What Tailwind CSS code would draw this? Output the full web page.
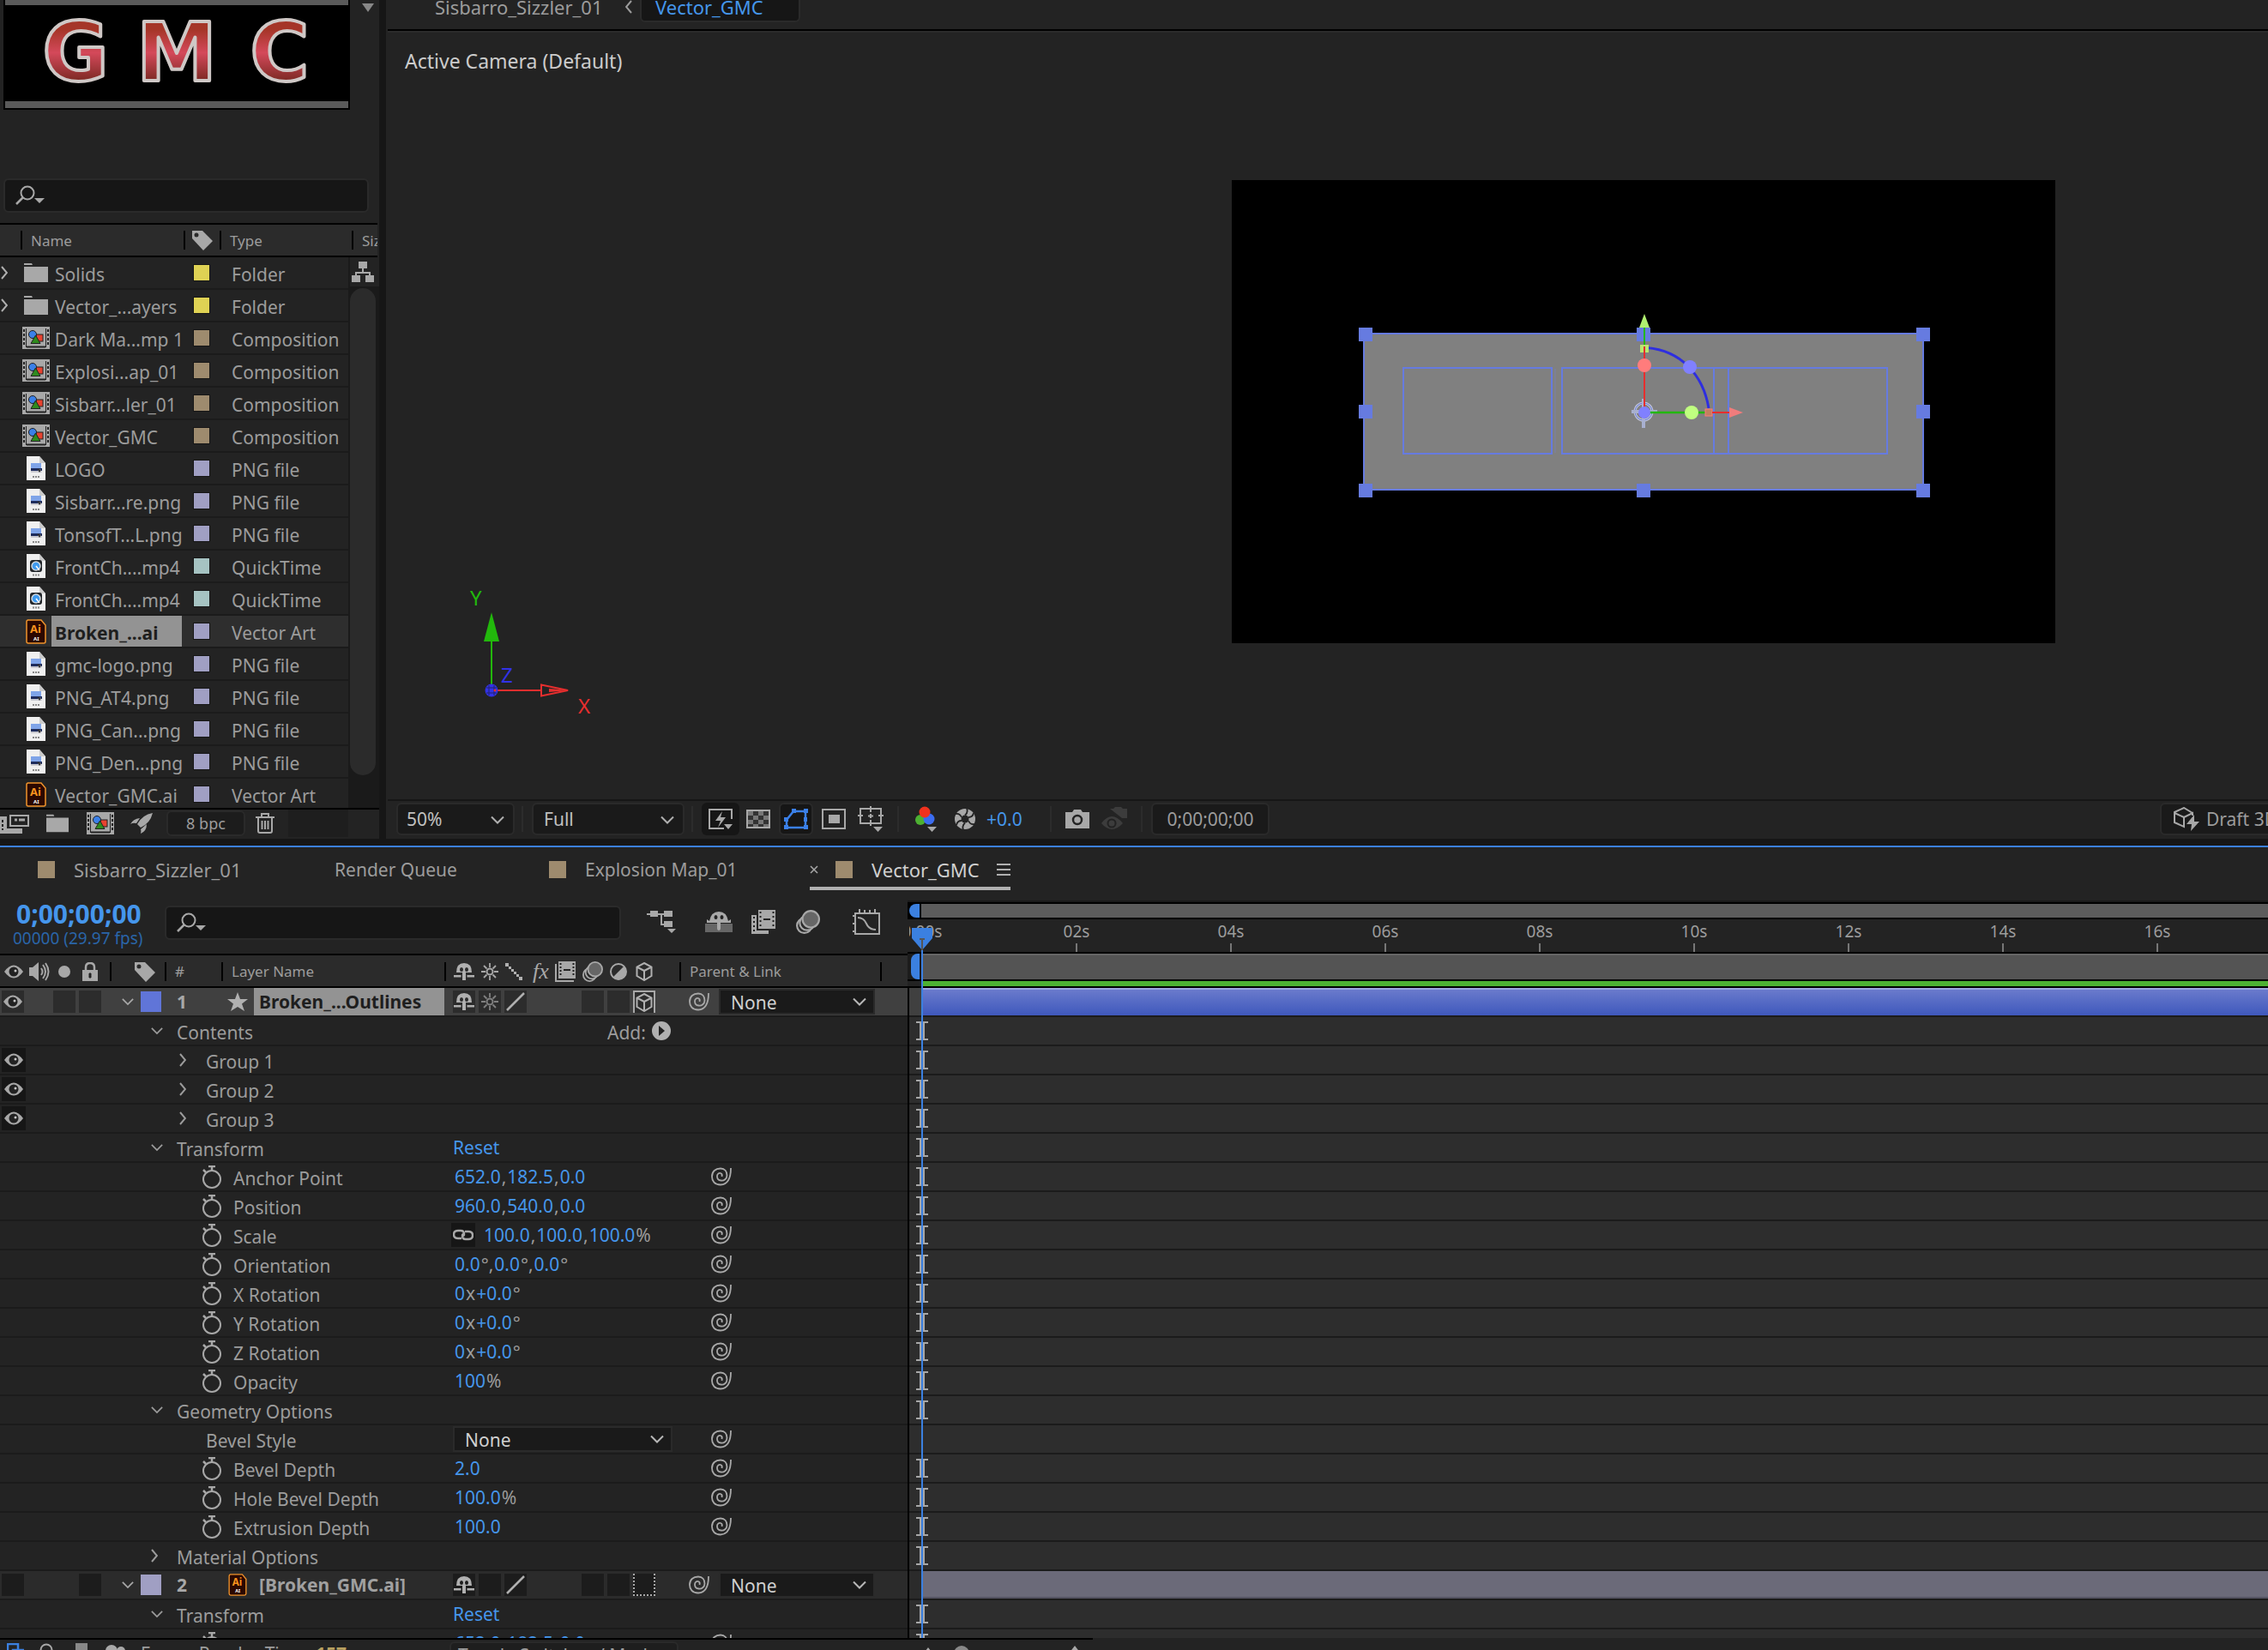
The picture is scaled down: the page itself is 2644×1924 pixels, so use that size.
<!DOCTYPE html>
<html lang="en">
<head>
<meta charset="utf-8">
<title>Vector_GMC – Compositor</title>
<script src="https://cdn.jsdelivr.net/npm/@tailwindcss/browser@4"></script>
</head>
<body class="h-screen overflow-hidden bg-[#161616] font-['Noto_Sans',sans-serif] text-[21px] leading-7 text-[#9c9c9c]">

<svg class="hidden" aria-hidden="true">
  <symbol id="eye" viewBox="0 0 22 16"><path d="M0 8Q11 -7 22 8Q11 23 0 8Z" fill="#a8a8a8"/><circle cx="11" cy="8" r="5.5" fill="#222"/><circle cx="11" cy="8" r="3.2" fill="#222"/><circle cx="13" cy="7" r="1.5" fill="#c8c8c8"/></symbol>
  <symbol id="down" viewBox="0 0 16 10"><path d="M1 1.5L8 8.5L15 1.5" fill="none" stroke="currentColor" stroke-width="2"/></symbol>
  <symbol id="right" viewBox="0 0 8 16"><path d="M1 1L7 8L1 15" fill="none" stroke="currentColor" stroke-width="2"/></symbol>
  <symbol id="search" viewBox="0 0 34 24"><circle cx="14" cy="9" r="7.5" fill="none" stroke="#a8a8a8" stroke-width="2"/><path d="M9 14L1 22" stroke="#a8a8a8" stroke-width="2.5"/><path d="M22 15H34L28 21Z" fill="#a8a8a8"/></symbol>
  <symbol id="tag" viewBox="0 0 24 24"><path fill-rule="evenodd" d="M0 1V10L13 24L24 13L12 1ZM5 3.5A2.5 2.5 0 1 1 5 8.5A2.5 2.5 0 1 1 5 3.5Z" fill="#a8a8a8"/></symbol>
  <symbol id="folder" viewBox="0 0 28 22"><path d="M0 0H9L10 2H0ZM0 4H28V22H0Z" fill="#a8a8a8"/></symbol>
  <symbol id="comp" viewBox="0 0 32 26"><path d="M0 0H32V26H0Z" fill="#a8a8a8"/><path d="M2 3V6M2 8V11M2 13V16M2 18V21M30 3V6M30 8V11M30 13V16M30 18V21" stroke="#222" stroke-width="2"/><path d="M4 2H5V24H4ZM27 2H28V24H27ZM5 22.5H27V24.5H5Z" fill="#222"/><rect x="16" y="9" width="8" height="8" fill="#e8422f" stroke="#222"/><circle cx="12" cy="9" r="4.500" fill="#3b80e8" stroke="#222"/><path d="M15.500 10L21 19.500H10Z" fill="#2f8a1e" stroke="#222"/></symbol>
  <symbol id="png" viewBox="0 0 22 28"><path d="M0 0H15L22 8V28H0Z" fill="#efefef"/><path d="M15 0V8H22Z" fill="#c9c9c9"/><rect x="5" y="8" width="12" height="6" fill="#7fa4e8"/><rect x="5" y="14" width="13" height="3" fill="#1d2b5c"/><path d="M5 17H13L16 15L18 19H5Z" fill="#c9c9cf"/><path d="M12 14L17 16L15 19Z" fill="#333"/><path d="M7 24H9M10 24H12M13 24H15" stroke="#888" stroke-width="2"/></symbol>
  <symbol id="mp4" viewBox="0 0 22 28"><path d="M0 0H15L22 8V28H0Z" fill="#efefef"/><path d="M15 0V8H22Z" fill="#c9c9c9"/><rect x="4" y="7" width="14" height="14" rx="3" fill="#202428"/><circle cx="11" cy="14" r="5" fill="#3f9bf0" stroke="#d0d8e0" stroke-width="1.500"/><path d="M11 14L15 19" stroke="#fff" stroke-width="1.500"/><path d="M7 24.500H9M10 24.500H12M13 24.500H15" stroke="#888" stroke-width="2"/></symbol>
  <symbol id="ai" viewBox="0 0 24 29"><path d="M2 1H18L23 7V26Q23 28 21 28H3Q1 28 1 26V3Q1 1 3 1Z" fill="#2b0800" stroke="#f0922b" stroke-width="1.500"/><text x="5" y="16" font-family="Noto Sans" font-weight="700" font-size="13" fill="#f7931e">Ai</text><text x="9" y="25" font-family="Noto Sans" font-weight="700" font-size="6" fill="#fff">AI</text></symbol>
  <symbol id="tree" viewBox="0 0 26 24"><path d="M8 0H18V8H8ZM0 16H10V24H0ZM16 16H26V24H16Z" fill="#a8a8a8"/><path d="M13 8V13M5 16V13H21V16" fill="none" stroke="#a8a8a8" stroke-width="2"/></symbol>
  <symbol id="interpret" viewBox="0 0 34 24"><path d="M12 3H33V15H12Z" fill="none" stroke="#a8a8a8" stroke-width="2"/><path d="M17 8H20M22 8H29" stroke="#a8a8a8" stroke-width="3"/><path d="M0 4H8V18H26V24H0Z" fill="#a8a8a8"/><path d="M3 8V20" stroke="#222" stroke-width="2" stroke-dasharray="3 2"/></symbol>
  <symbol id="rocket" viewBox="0 0 26 24"><path d="M26 0Q14 2 8 13L12 17Q23 12 26 0ZM0 13Q3 7 11 6L7 12Q3 11 0 13ZM12 24Q13 21 12 19L19 13Q19 21 12 24Z" fill="#a8a8a8"/></symbol>
  <symbol id="trash" viewBox="0 0 22 24"><path d="M0 5H22M7 4V1H15V4M3 5V21Q3 23 5 23H17Q19 23 19 21V5M7.500 9V19M11 9V19M14.500 9V19" fill="none" stroke="#a8a8a8" stroke-width="2"/></symbol>
  <symbol id="speaker" viewBox="0 0 24 22"><path d="M0 6H4L11 0V22L4 16H0Z" fill="#a8a8a8"/><path d="M14 7Q17 11 14 15M16 3Q22 11 16 19M19 1Q26 11 19 21" fill="none" stroke="#a8a8a8" stroke-width="2"/></symbol>
  <symbol id="lock" viewBox="0 0 18 22"><path d="M0 9H18V22H0Z" fill="#a8a8a8"/><path d="M4 10V6Q4 1 9 1Q14 1 14 6V10" fill="none" stroke="#a8a8a8" stroke-width="2.500"/><path d="M8 13H10V18H8Z" fill="#222" stroke="#222"/></symbol>
  <symbol id="shy" viewBox="0 0 24 20"><path fill-rule="evenodd" d="M3 11Q3 0 12 0Q21 0 21 11ZM9 5A2 2.500 0 1 0 9 10A2 2.500 0 1 0 9 5ZM15 5A2 2.500 0 1 0 15 10A2 2.500 0 1 0 15 5Z" fill="#b0b0b0"/><path d="M10 10H14V20H10ZM0 14H8.500V16.500H0ZM15.500 14H24V16.500H15.500Z" fill="#b0b0b0"/></symbol>
  <symbol id="sun" viewBox="0 0 20 20"><circle cx="10" cy="10" r="3.500" fill="none" stroke="currentColor" stroke-width="2"/><path d="M10 0V5M10 15V20M0 10H5M15 10H20M3 3L6.500 6.500M13.500 13.500L17 17M17 3L13.500 6.500M6.500 13.500L3 17" stroke="currentColor" stroke-width="1.800"/></symbol>
  <symbol id="steps" viewBox="0 0 20 20"><path d="M0 0H4V4H0ZM4 4H7V7H4ZM7 7H10V10H7ZM10 10H13V13H10ZM13 13H16V16H13ZM16 16H20V20H16Z" fill="#b0b0b0"/></symbol>
  <symbol id="slash" viewBox="0 0 22 22"><path d="M1 21L21 1" stroke="#b0b0b0" stroke-width="2.500"/></symbol>
  <symbol id="film" viewBox="0 0 24 24"><path d="M4 0H24V20H4Z" fill="#a8a8a8"/><path d="M6.500 2V18M21.500 2V18" stroke="#222" stroke-width="2" stroke-dasharray="2 2"/><path d="M10 10H18" stroke="#222" stroke-width="2"/><path d="M1 3V23H22" fill="none" stroke="#a8a8a8" stroke-width="2"/></symbol>
  <symbol id="blur" viewBox="0 0 26 26"><circle cx="9" cy="17" r="8" fill="#2b2b2b" stroke="#a8a8a8" stroke-width="2"/><circle cx="12" cy="14" r="8" fill="#2b2b2b" stroke="#a8a8a8" stroke-width="2"/><circle cx="16" cy="10" r="9" fill="#666" stroke="#a8a8a8" stroke-width="2"/></symbol>
  <symbol id="half" viewBox="0 0 20 20"><circle cx="10" cy="10" r="9" fill="none" stroke="#a8a8a8" stroke-width="2"/><path d="M16.500 3.500A9 9 0 0 1 3.500 16.500Z" fill="#a8a8a8"/></symbol>
  <symbol id="cube" viewBox="0 0 20 22"><path d="M10 1L18.500 5.500V16L10 21L1.500 16V5.500ZM1.500 5.500L10 10L18.500 5.500M10 10V21" fill="none" stroke="#b0b0b0" stroke-width="2"/></symbol>
  <symbol id="whip" viewBox="0 0 24 22"><path d="M23 1C23 9 21 20 11 20.500C4 20.500 1 16 1 11C1 5 5 1.500 11 1.500C16 1.500 18.500 5 18.500 9.500C18.500 13.500 15 16 11.500 15.500C8 15.300 7 12.500 7 10.500C7 8 9 6.500 11 7C13 7.500 13 9 12.500 11" fill="none" stroke="#a8a8a8" stroke-width="1.800"/></symbol>
  <symbol id="watch" viewBox="0 0 22 27"><circle cx="11" cy="16" r="10" fill="none" stroke="#a8a8a8" stroke-width="2"/><path d="M7 1H15M11 1V6M1 5L4 8" stroke="#a8a8a8" stroke-width="2.500"/></symbol>
  <symbol id="link" viewBox="0 0 24 14"><path d="M10 11H6Q1 11 1 6.500Q1 2 6 2H9Q13 2 13 6Q13 8 11 8M14 3H18Q23 3 23 7.500Q23 12 18 12H15Q11 12 11 8Q11 6 13 6" fill="none" stroke="#a8a8a8" stroke-width="2.500"/></symbol>
  <symbol id="play" viewBox="0 0 22 22"><circle cx="11" cy="11" r="11" fill="#b0b0b0"/><path d="M8 5L15 11L8 17Z" fill="#222"/></symbol>
  <symbol id="star" viewBox="0 0 24 22"><path d="M12 0L15 8H24L17 13.500L20 22L12 17L4 22L7 13.500L0 8H9Z" fill="#b0b0b0"/></symbol>
  <symbol id="ibeam" viewBox="0 0 14 22"><path d="M0 0H14V2H10V20H14V22H0V20H4V2H0Z" fill="#a8a8a8"/></symbol>
</svg>

<main class="flex h-full flex-col">
  <section class="flex h-[978px] shrink-0">
    <!-- Project panel -->
    <aside class="flex w-[442px] shrink-0 flex-col bg-[#232323]" aria-label="Project">
      <div class="flex h-[208px] items-start pl-1">
        <div class="flex h-32 w-[404px] flex-col justify-between border-2 border-t-0 border-black bg-black">
          <div class="h-1.5 bg-[#5a5a5a]"></div>
          <svg class="h-[112px] w-[400px]" viewBox="0 0 400 112" role="img" aria-label="GMC">
            <defs><linearGradient id="red" x1="0" y1="0" x2="0" y2="1"><stop offset=".25" stop-color="#a53528"/><stop offset=".5" stop-color="#d4495a"/><stop offset=".8" stop-color="#7d2a24"/></linearGradient></defs>
            <g font-family="DejaVu Sans" font-weight="700" font-size="94" text-anchor="middle" fill="url(#red)" stroke="#cfc8c6" stroke-width="4" stroke-linejoin="round">
              <text x="82" y="88">G</text><text x="200" y="88">M</text><text x="320" y="88">C</text>
            </g>
          </svg>
          <div class="h-2 bg-[#5a5a5a]"></div>
        </div>
        <svg class="mt-1 ml-3.5 h-2.5 w-3.5" viewBox="0 0 14 10"><path d="M0 0H14L7 10Z" fill="#888"/></svg>
      </div>
      <label class="ml-1 flex h-10 w-[426px] items-center rounded-md border-2 border-[#2a2a2a] bg-[#161616] pl-3">
        <svg class="h-6 w-[34px]"><use href="#search"/></svg>
        <input type="text" aria-label="Search project" class="min-w-0 flex-1 bg-transparent px-2 outline-none">
      </label>
      <div class="relative mt-3 h-[684px] overflow-hidden border-b-2 border-black">
        <table class="w-[440px] table-fixed border-separate border-spacing-0 text-left">
          <colgroup><col class="w-[214px]"><col class="w-[42px]"><col class="w-[154px]"><col class="w-[30px]"></colgroup>
          <thead class="text-[17px]">
            <tr class="h-10 bg-[#2b2b2b]">
              <th class="h-10 border-y-2 border-black p-0 font-normal"><span class="ml-6 flex h-[22px] items-center border-l-2 border-black pt-0.5 pl-2.5">Name</span></th>
              <th class="border-y-2 border-black p-0"><span class="flex h-[22px] items-center border-l-2 border-black pl-2"><svg class="h-6 w-6"><use href="#tag"/></svg></span></th>
              <th class="border-y-2 border-black p-0 font-normal"><span class="flex h-[22px] items-center border-l-2 border-black pt-0.5 pl-2.5">Type</span></th>
              <th class="border-y-2 border-black p-0 font-normal"><span class="flex h-[22px] items-center overflow-hidden border-l-2 border-black pt-0.5 pl-2.5">Size</span></th>
            </tr>
          </thead>
          <tbody id="files"></tbody>
        </table>
        <div class="absolute top-10 right-0 bottom-0 w-9 bg-[#1a1a1a] pl-0.5">
          <div class="flex h-[34px] items-center bg-[#232323] pl-0.5"><svg class="h-6 w-[26px]"><use href="#tree"/></svg></div>
          <div class="mt-0.5 h-[568px] w-[30px] rounded-full bg-[#2b2b2b]"></div>
        </div>
      </div>
      <div class="flex flex-1 items-center pb-0.5">
        <svg class="h-6 w-[34px]"><use href="#interpret"/></svg>
        <svg class="ml-5 h-[22px] w-[26px]"><use href="#folder"/></svg>
        <svg class="ml-5 h-[26px] w-[34px]"><use href="#comp"/></svg>
        <svg class="ml-[18px] h-6 w-[26px]"><use href="#rocket"/></svg>
        <button class="ml-4 h-[30px] w-[92px] rounded-md border-2 border-[#2a2a2a] bg-[#1c1c1c] text-[18px] leading-6">8 bpc</button>
        <svg class="ml-3 h-6 w-[22px]"><use href="#trash"/></svg>
        <span class="ml-4 h-8 w-[70px] bg-[#1e1e1e]"></span>
      </div>
    </aside>

    <!-- Composition viewer -->
    <section class="ml-2 flex min-w-0 flex-1 flex-col overflow-hidden bg-[#232323] pl-0.5" aria-label="Composition">
      <nav class="flex h-[38px] items-start border-b-2 border-[#2b2b2b]">
        <div class="flex h-9 w-full items-start border-b-2 border-black pl-[55px]">
          <a href="#" class="-mt-1.5 w-[192px] text-[22px]">Sisbarro_Sizzler_01</a>
          <svg class="ml-[29px] h-4 w-2.5 rotate-180" viewBox="0 0 8 16"><use href="#right"/></svg>
          <a href="#" class="ml-2 h-[26px] w-[187px] rounded-b-md border-2 border-t-0 border-[#2a2a2a] bg-[#161616] pl-4 text-[22px] text-[#4596ec]"><span class="-mt-1.5 block">Vector_GMC</span></a>
        </div>
      </nav>
      <div class="relative flex-1 overflow-hidden">
        <p class="px-5 pt-3.5 text-[23px] leading-[38px] text-[#cccccc]">Active Camera (Default)</p>
        <svg class="absolute top-[640px] left-[80px] h-[170px] w-[170px]" viewBox="532 678 170 170" font-family="Noto Sans" font-size="24">
          <text x="548" y="706" fill="#22b80c">Y</text><text x="584" y="796" fill="#3232e6">Z</text><text x="674" y="832" fill="#e62e2e">X</text>
          <path d="M573 800V747" stroke="#22b80c" stroke-width="2"/><path d="M573 714L582 748H564Z" fill="#22b80c"/>
          <path d="M578 805H632" stroke="#e62e2e" stroke-width="2"/><path d="M631 798.500L662 805L631 811.500Z" fill="none" stroke="#e62e2e" stroke-width="2"/><path d="M640 803L664 805L640 807Z" fill="#e62e2e"/>
          <circle cx="573" cy="805" r="7.500" fill="#3232e6"/><path d="M567 802H579M567 808H579M570 799V811M576 799V811" stroke="#23236a"/><circle cx="577" cy="805" r="1.500" fill="#e62e2e"/>
        </svg>
        <svg class="absolute top-[172px] left-[984px] h-[540px] w-[960px]" viewBox="1436 210 960 540">
          <rect x="1436" y="210" width="960" height="540" fill="#000"/>
          <rect x="1590" y="389" width="652" height="182" fill="#808080" stroke="#667be0" stroke-width="2"/>
          <g fill="none" stroke="#667be0" stroke-width="2"><rect x="1636" y="429" width="173" height="100"/><rect x="1821" y="429" width="194" height="100"/><rect x="1998" y="429" width="202" height="100"/></g>
          <path d="M1813 430V528" stroke="#7a80a8"/>
          <g fill="#667be0"><path d="M1584 382h16v16h-16zM1908 382h16v16h-16zM2234 382h16v16h-16zM1584 472h16v16h-16zM2234 472h16v16h-16zM1584 564h16v16h-16zM1908 564h16v16h-16zM2234 564h16v16h-16z"/></g>
          <circle cx="1916" cy="480" r="10" fill="none" stroke="#c0c4d8" stroke-width="3"/><circle cx="1916" cy="480" r="10" fill="none" stroke="#6478d8"/><path d="M1902 480H1932M1916 465V499" stroke="#a8b0d0" stroke-width="4"/>
          <path d="M1920 405.500Q1949 408 1968 427T1992 476" fill="none" stroke="#2e2ee0" stroke-width="3"/>
          <circle cx="1970" cy="428" r="8" fill="#8080ff"/>
          <path d="M1917 404V380" stroke="#22b80c" stroke-width="2"/><path d="M1917 366L1923 382H1911Z" fill="#b0f070"/><rect x="1912" y="402" width="10" height="9" fill="#b8e870"/>
          <path d="M1917 404V476" stroke="#e62e2e" stroke-width="2"/><circle cx="1917" cy="426" r="8" fill="#ff7c7c"/>
          <path d="M1922 481H1994" stroke="#22b80c" stroke-width="2.500"/><circle cx="1972" cy="481" r="8" fill="#c0ff80"/>
          <rect x="1988" y="477" width="8" height="8" fill="#c08060" stroke="#ff7878"/><path d="M1996 481H2018" stroke="#e62e2e" stroke-width="2"/><path d="M2016 475L2032 481L2016 487Z" fill="#f07c7c"/>
          <circle cx="1917" cy="481" r="7" fill="#8080ff"/>
        </svg>
      </div>
      <footer class="flex h-[46px] items-center border-t-2 border-[#161616] pb-0.5">
        <span class="relative ml-2.5 h-[38px] w-[138px]">
          <select aria-label="Magnification" class="h-full w-full appearance-none rounded-md border-2 border-[#2a2a2a] bg-[#1a1a1a] pl-2.5 text-[#c0c0c0]"><option>50%</option></select>
          <svg class="pointer-events-none absolute top-[15px] right-3 h-2.5 w-4 text-[#b0b0b0]"><use href="#down"/></svg>
        </span>
        <i class="ml-2 h-[30px] w-0.5 bg-[#2c2c2c]"></i>
        <span class="relative ml-2.5 h-[38px] w-[178px]">
          <select aria-label="Resolution" class="h-full w-full appearance-none rounded-md border-2 border-[#2a2a2a] bg-[#1a1a1a] pl-3 text-[#c0c0c0]"><option>Full</option></select>
          <svg class="pointer-events-none absolute top-[15px] right-3 h-2.5 w-4 text-[#b0b0b0]"><use href="#down"/></svg>
        </span>
        <i class="ml-2 h-[30px] w-0.5 bg-[#2c2c2c]"></i>
        <button aria-label="Fast previews" class="ml-2.5 flex h-[38px] w-11 items-center justify-center rounded-md bg-[#161616]"><svg class="h-6 w-7" viewBox="0 0 28 24"><path d="M27 12V1H1V23H18" fill="none" stroke="#a8a8a8" stroke-width="2"/><path d="M16 3L8 14H14L11 22L20 10H14Z" fill="#a8a8a8"/><path d="M18 18H28L23 24Z" fill="#a8a8a8"/></svg></button>
        <button aria-label="Transparency grid" class="ml-2"><svg class="h-[22px] w-7" viewBox="0 0 28 22"><path d="M1 1H27V21H1Z" fill="#333" stroke="#a8a8a8" stroke-width="2"/><path d="M2 2h6v5h-6zM14 2h6v5h-6zM8 7h6v5h-6zM20 7h6v5h-6zM2 12h6v5h-6zM14 12h6v5h-6zM8 17h6v3h-6zM20 17h6v3h-6z" fill="#777"/></svg></button>
        <button aria-label="Mask visibility" class="ml-2.5 flex h-[38px] w-10 items-center justify-center rounded-md border-2 border-[#2a2a2a] bg-[#161616]"><svg class="h-6 w-[30px] shrink-0" viewBox="0 0 30 24"><path d="M12 3H26V22H4V13Z" fill="none" stroke="#3b80e8" stroke-width="2.500"/><path d="M10 0h5v5h-5zM24 0h5v5h-5zM24 10h4v5h-4zM24 19h5v5h-5zM1 19h5v5h-5zM1 10h5v5h-5z" fill="#3b80e8"/></svg></button>
        <button aria-label="Region of interest" class="ml-2.5"><svg class="h-6 w-7" viewBox="0 0 28 24"><path d="M1 1H27V23H1Z" fill="none" stroke="#a8a8a8" stroke-width="2"/><path d="M8 7H21V17H8Z" fill="#a8a8a8"/></svg></button>
        <button aria-label="Grid and guides" class="ml-3.5"><svg class="h-[30px] w-[30px]" viewBox="0 0 30 30"><path d="M3 3H27V20H3ZM15 0V7M15 16V23M0 11H6M24 11H30M15 9V14M12 11.500H18" fill="none" stroke="#a8a8a8" stroke-width="2"/><path d="M18 24H29L23.500 30Z" fill="#a8a8a8"/></svg></button>
        <i class="ml-4 h-[30px] w-0.5 bg-[#2c2c2c]"></i>
        <button aria-label="Channels" class="ml-[18px]"><svg class="h-[30px] w-[26px]" viewBox="0 0 26 30"><circle cx="7" cy="16" r="6" fill="#4db132"/><circle cx="17" cy="15" r="6.500" fill="#3c6cf0"/><circle cx="12" cy="7" r="6.500" fill="#f0321e"/><path d="M15 24H26L20.500 30Z" fill="#a8a8a8"/></svg></button>
        <button aria-label="Exposure" class="ml-5"><svg class="h-6 w-[26px]" viewBox="0 0 24 24"><circle cx="12" cy="12" r="12" fill="#a8a8a8"/><circle cx="12" cy="12" r="4.500" fill="#232323"/><path d="M12 7.500Q16 4 14 0M16 10Q21 10 22 5M16 14Q18 19 23 18M12 16.500Q8 20 10 24M8 14Q3 14 2 19M8 10Q6 5 1 6" fill="none" stroke="#232323" stroke-width="1.800"/></svg></button>
        <span class="ml-3 w-[42px] text-[#4596ec]">+0.0</span>
        <i class="ml-8 h-[30px] w-0.5 bg-[#2c2c2c]"></i>
        <button aria-label="Snapshot" class="ml-4"><svg class="h-[22px] w-7" viewBox="0 0 28 22"><path d="M0 3H8L10 0H18L20 3H28V22H0Z" fill="#a8a8a8"/><circle cx="14" cy="12" r="5" fill="none" stroke="#232323" stroke-width="2.500"/></svg></button>
        <button aria-label="Show snapshot" class="ml-3.5"><svg class="h-7 w-[30px]" viewBox="0 0 30 28"><path d="M10 2H14L16 0H23L25 2H30V13H24M0 19Q12 3 25 19Q12 33 0 19Z" fill="#3c3c3c"/><circle cx="12" cy="19" r="4.500" fill="#3c3c3c" stroke="#222" stroke-width="2"/></svg></button>
        <i class="ml-4 h-[30px] w-0.5 bg-[#2c2c2c]"></i>
        <button class="ml-2.5 h-[38px] w-[138px] rounded-md border-2 border-[#2a2a2a] bg-[#1a1a1a]">0;00;00;00</button>
        <button class="-mr-5 ml-auto flex h-[38px] w-[146px] shrink-0 items-center rounded-md border-2 border-[#2a2a2a] bg-[#1a1a1a] pl-3.5">
          <svg class="h-7 w-[30px] shrink-0" viewBox="0 0 30 28"><path d="M22 7L12 1L1 6V18L12 23V12L1 7M12 12L22 7V10" fill="none" stroke="#a8a8a8" stroke-width="2"/><path d="M24 9L15 20H21L20 28L30 17H24Z" fill="#a8a8a8"/></svg>
          <span class="ml-2 whitespace-nowrap">Draft 3D</span>
        </button>
      </footer>
    </section>
  </section>

  <!-- Timeline panel -->
  <section class="mt-2 flex min-h-0 flex-1 flex-col border-t-2 border-[#3b80e0] bg-[#232323]" aria-label="Timeline">
    <nav class="flex h-[50px] shrink-0 items-center pt-px">
      <i class="ml-11 h-5 w-5 bg-[#9e8b6e]"></i><a href="#" class="ml-[22px] w-[192px] text-[22px]">Sisbarro_Sizzler_01</a>
      <a href="#" class="ml-[112px] w-[140px] whitespace-nowrap">Render Queue</a>
      <i class="ml-[110px] h-5 w-5 bg-[#9e8b6e]"></i><a href="#" class="ml-[22px] w-[182px] whitespace-nowrap">Explosion Map_01</a>
      <div class="ml-20 flex h-full w-[234px] items-center border-b-4 border-[#b0b0b0] pt-1">
        <button aria-label="Close tab"><svg class="h-2.5 w-2.5" viewBox="0 0 10 10"><path d="M1 1L9 9M9 1L1 9" stroke="#a8a8a8" stroke-width="1.500"/></svg></button>
        <i class="ml-5 h-5 w-5 bg-[#9e8b6e]"></i><a href="#" class="ml-[22px] w-[126px] text-[22px] text-[#d0d0d0]">Vector_GMC</a>
        <button aria-label="Panel menu" class="ml-auto"><svg class="h-3.5 w-4" viewBox="0 0 16 14"><path d="M0 1H16M0 7H16M0 13H16" stroke="#b0b0b0" stroke-width="2"/></svg></button>
      </div>
    </nav>
    <div class="flex min-h-0 flex-1">
      <div class="w-[1058px] shrink-0 overflow-hidden">
        <div class="flex h-[74px] items-start pt-3.5">
          <div class="w-[192px] pl-[15px]">
            <p class="pl-1 text-[30px] leading-7 font-bold text-[#4596ec]">0;00;00;00</p>
            <p class="text-[19px] leading-7 whitespace-nowrap text-[#2a65a8]">00000 (29.97 fps)</p>
          </div>
          <label class="mt-1 flex h-10 w-[532px] items-center rounded-md border-2 border-[#2a2a2a] bg-[#161616] pl-3">
            <svg class="h-6 w-[34px]"><use href="#search"/></svg>
            <input type="text" aria-label="Search layers" class="min-w-0 flex-1 bg-transparent px-2 outline-none">
          </label>
          <div class="mt-2 flex h-[30px] items-center">
            <button aria-label="Mini-flowchart" class="ml-[30px]"><svg class="h-[26px] w-[34px]" viewBox="0 0 34 26"><path d="M0 4H28M17 4V16H24" fill="none" stroke="#a8a8a8" stroke-width="2"/><path d="M4 0h9v7h-9zM20 0h10v7h-10zM20 12h10v7h-10zM24 21h10l-5 5z" fill="#a8a8a8"/></svg></button>
            <button aria-label="Hide shy layers" class="ml-[34px]"><svg class="h-6 w-8" viewBox="0 0 32 24"><path d="M0 14H32V24H0Z" fill="#666"/><path fill-rule="evenodd" d="M2 13V9L5 11Q7 0 16 0Q25 0 27 11L30 9V13H18V19Q18 22 16 22Q14 22 14 19V13ZM12.500 4A2 2.500 0 1 0 12.500 9A2 2.500 0 1 0 12.500 4ZM19.500 4A2 2.500 0 1 0 19.500 9A2 2.500 0 1 0 19.500 4Z" fill="#a8a8a8"/></svg></button>
            <button aria-label="Frame blending" class="ml-[22px]"><svg class="h-7 w-7" viewBox="0 0 28 28"><path d="M8 0H28V22H8Z" fill="#a8a8a8"/><path d="M10.500 2V20M25.500 2V20" stroke="#222" stroke-width="2" stroke-dasharray="2 3"/><path d="M14 11H22" stroke="#222" stroke-width="2"/><path d="M0 6H6V24H20V28H0Z" fill="#a8a8a8"/><path d="M3 8V26" stroke="#222" stroke-width="2" stroke-dasharray="2 3"/></svg></button>
            <button aria-label="Motion blur" class="ml-6"><svg class="h-7 w-7"><use href="#blur"/></svg></button>
            <button aria-label="Graph editor" class="ml-[38px]"><svg class="h-[30px] w-8" viewBox="0 0 32 30"><path d="M3 5H31V29H3ZM8 0V5M14 1V5M20 1V5M26 0V5M0 8H3M0 17H3M0 26H3M6 10Q13 10 16 17T27 24" fill="none" stroke="#a8a8a8" stroke-width="2"/></svg></button>
          </div>
        </div>
        <div class="flex h-10 items-center border-y-2 border-black bg-[#2b2b2b] pt-px text-[17px]">
          <svg class="ml-[5px] h-4 w-[22px]"><use href="#eye"/></svg>
          <svg class="ml-[7px] h-[22px] w-6"><use href="#speaker"/></svg>
          <i class="ml-2.5 h-3.5 w-3.5 rounded-full bg-[#a8a8a8]"></i>
          <svg class="ml-3.5 h-[22px] w-[18px]"><use href="#lock"/></svg>
          <i class="ml-3.5 h-[22px] w-0.5 bg-black"></i>
          <svg class="ml-[27px] h-6 w-6"><use href="#tag"/></svg>
          <i class="ml-[11px] h-[22px] w-0.5 bg-black"></i>
          <span class="ml-2.5 w-[54px]">#</span>
          <i class="h-[22px] w-0.5 bg-black"></i>
          <span class="ml-2.5 w-[248px]">Layer Name</span>
          <i class="h-[22px] w-0.5 bg-black"></i>
          <div class="flex w-[272px] items-center gap-2 pl-[9px] text-[#a8a8a8]">
            <svg class="h-5 w-6"><use href="#shy"/></svg>
            <svg class="h-5 w-5"><use href="#sun"/></svg>
            <svg class="h-5 w-5"><use href="#steps"/></svg>
            <span class="w-[22px] pl-1 font-['Liberation_Serif',serif] text-[26px] leading-6 italic">fx</span>
            <svg class="h-6 w-6"><use href="#film"/></svg>
            <svg class="h-6 w-6"><use href="#blur"/></svg>
            <svg class="h-5 w-5"><use href="#half"/></svg>
            <svg class="ml-0.5 h-[22px] w-5"><use href="#cube"/></svg>
          </div>
          <i class="h-[22px] w-0.5 bg-black"></i>
          <span class="ml-2.5 w-[222px]">Parent &amp; Link</span>
          <i class="h-[22px] w-0.5 bg-black"></i>
        </div>
        <div id="layers"></div>
      </div>

      <div class="relative min-w-0 flex-1 overflow-hidden">
        <div class="mt-3 h-0.5 bg-[#1a1a1a]"></div>
        <div class="flex h-5 border-y-2 border-black bg-black pl-0.5">
          <i class="mr-0.5 w-3 rounded-l-full bg-[#3b80e0]"></i>
          <i class="flex-1 bg-[#5c5c5c]"></i>
        </div>
        <div class="ml-0.5 h-[38px] overflow-hidden">
          <div id="ruler" class="-ml-[75px] flex text-[19px] leading-7"></div>
        </div>
        <div class="flex h-[34px] border-y-2 border-black bg-[#1c1c1c] pl-1">
          <i class="mr-1 w-2.5 rounded-l-lg bg-[#3b80e0]"></i>
          <i class="flex-1 border-t-2 border-[#666666] bg-[#545454]"></i>
        </div>
        <div class="h-2 border-b-2 border-black pl-[18px]"><div class="h-1.5 bg-[#4db132]"></div></div>
        <div id="tracks" class="border-l-2 border-black"></div>
        <i class="absolute top-[70px] bottom-0 left-4 w-0.5 bg-[#3b80e0]"></i>
        <svg class="absolute top-[44px] left-[5px] h-[26px] w-6" viewBox="0 0 24 26"><path d="M0 0H24V12L12 26L0 12Z" fill="#3b80e0"/><path d="M9 13H15M12 13V26" stroke="#555" stroke-width="2"/></svg>
      </div>
    </div>
    <footer class="h-3.5 shrink-0 overflow-hidden">
      <div class="h-0.5 w-[1274px] bg-black"></div>
      <div class="flex h-8 items-center">
        <svg class="ml-2 h-6 w-5" viewBox="0 0 20 24"><path d="M1 1H13V14H1ZM7 8H19V22H7Z" fill="none" stroke="#3b80e0" stroke-width="2.500"/></svg>
        <svg class="ml-[18px] h-6 w-4" viewBox="0 0 16 24"><circle cx="8" cy="8" r="6.500" fill="none" stroke="#a8a8a8" stroke-width="2"/></svg>
        <svg class="ml-[26px] h-6 w-3.5" viewBox="0 0 14 24"><path d="M0 0H14V24H0Z" fill="#888"/></svg>
        <svg class="ml-5 h-6 w-6" viewBox="0 0 24 24"><circle cx="8" cy="9" r="7" fill="#a8a8a8"/><circle cx="19" cy="9" r="5" fill="#a8a8a8"/></svg>
        <span class="ml-[18px] w-[204px] whitespace-nowrap">Frame Render Time</span>
        <span class="w-[156px] text-[#b8a060]"><b>157</b>ms</span>
        <button class="mt-1 h-8 w-[267px] rounded-md border-2 border-[#2a2a2a] bg-[#1e1e1e] px-2 text-left whitespace-nowrap">Toggle Switches / Modes</button>
        <svg class="ml-[284px] h-6 w-[190px]" viewBox="0 0 190 24"><path d="M0 14L7 5L14 14ZM168 16L178 3L188 16Z" fill="#a8a8a8"/><circle cx="46" cy="12" r="9" fill="#888"/></svg>
      </div>
    </footer>
  </section>
</main>

<script>
const svg = (id, cls) => `<svg class="${cls}"><use href="#${id}"/></svg>`;

// Project panel rows: [icon, name, label colour, type]
const YEL = 'bg-[#dfd254]', TAN = 'bg-[#9e8b6e]', LAV = 'bg-[#a09fc3]', SEA = 'bg-[#a6c3c2]';
const iconClass = { folder: 'h-[22px] w-7', comp: 'h-[26px] w-8', png: 'h-7 w-[22px]', mp4: 'h-7 w-[22px]', ai: 'h-[29px] w-6' };
const files = [
  ['folder', 'Solids', YEL, 'Folder'], ['folder', 'Vector_...ayers', YEL, 'Folder'],
  ['comp', 'Dark Ma...mp 1', TAN, 'Composition'], ['comp', 'Explosi...ap_01', TAN, 'Composition'],
  ['comp', 'Sisbarr...ler_01', TAN, 'Composition'], ['comp', 'Vector_GMC', TAN, 'Composition'],
  ['png', 'LOGO', LAV, 'PNG file'], ['png', 'Sisbarr...re.png', LAV, 'PNG file'], ['png', 'TonsofT...L.png', LAV, 'PNG file'],
  ['mp4', 'FrontCh....mp4', SEA, 'QuickTime'], ['mp4', 'FrontCh....mp4', SEA, 'QuickTime'],
  ['ai', 'Broken_...ai', LAV, 'Vector Art', true],
  ['png', 'gmc-logo.png', LAV, 'PNG file'], ['png', 'PNG_AT4.png', LAV, 'PNG file'],
  ['png', 'PNG_Can...png', LAV, 'PNG file'], ['png', 'PNG_Den...png', LAV, 'PNG file'],
  ['ai', 'Vector_GMC.ai', LAV, 'Vector Art'],
];
document.getElementById('files').innerHTML = files.map(([icon, name, color, type, sel]) => `
  <tr class="${sel ? 'bg-[#2e2e2e]' : ''}">
    <td class="h-[38px] border-b-2 border-[#1b1b1b] p-0"><div class="flex h-9 items-center">
      <span class="w-[22px] text-[#b0b0b0]">${icon === 'folder' ? svg('right', 'ml-px h-4 w-2') : ''}</span>
      <span class="flex w-10 justify-center">${svg(icon, iconClass[icon])}</span>
      <span class="flex h-9 items-center pt-1 whitespace-nowrap ${sel ? '-ml-0.5 w-[152px] bg-[#939393] pl-1 font-bold text-[#1e1e1e]' : 'pl-0.5'}">${name}</span></div></td>
    <td class="border-b-2 border-[#1b1b1b] p-0"><i class="ml-[11px] block h-5 w-5 border border-[#161616] ${color}"></i></td>
    <td class="border-b-2 border-[#1b1b1b] p-0 pt-1 pl-3.5 whitespace-nowrap">${type}</td>
    <td class="border-b-2 border-[#1b1b1b] p-0"></td>
  </tr>`).join('');

// Timeline rows
const rows = [
  { layer: 1, name: 'Broken_...Outlines', sel: true },
  { head: 'Contents', add: true },
  { group: 'Group 1' }, { group: 'Group 2' }, { group: 'Group 3' },
  { head: 'Transform', reset: true },
  { prop: 'Anchor Point', v: '652.0|,|182.5|,|0.0' }, { prop: 'Position', v: '960.0|,|540.0|,|0.0' },
  { prop: 'Scale', v: '100.0|,|100.0|,|100.0|%', link: true }, { prop: 'Orientation', v: '0.0|°,|0.0|°,|0.0|°' },
  { prop: 'X Rotation', v: '0|x|+0.0|°' }, { prop: 'Y Rotation', v: '0|x|+0.0|°' }, { prop: 'Z Rotation', v: '0|x|+0.0|°' },
  { prop: 'Opacity', v: '100|%' },
  { head: 'Geometry Options' }, { bevel: 'Bevel Style' },
  { prop: 'Bevel Depth', v: '2.0' }, { prop: 'Hole Bevel Depth', v: '100.0|%' }, { prop: 'Extrusion Depth', v: '100.0' },
  { head: 'Material Options', closed: true },
  { layer: 2, name: '[Broken_GMC.ai]' },
  { head: 'Transform', reset: true },
  { prop: 'Anchor Point', v: '652.0|,|182.5|,|0.0' },
];
const value = v => v.split('|').map((t, i) => i % 2 ? `<span>${t}</span>` : `<span class="text-[#4596ec]">${t}</span>`).join('');
const pick = (label, cls) => `<span class="relative ${cls}">
  <select aria-label="${label}" class="block h-full w-full appearance-none border-2 border-[#2a2a2a] bg-[#1a1a1a] pl-3 text-[#d0d0d0]"><option>None</option></select>
  ${svg('down', 'pointer-events-none absolute top-2.5 right-2.5 h-2.5 w-4 text-[#b8b8b8]')}</span>`;

function layerRow(r) {
  const cell = r.sel ? 'bg-[#2c2c2c]' : 'bg-[#1c1c1c]';
  const box = (c, inner = '') => `<span class="flex h-[26px] w-[26px] shrink-0 items-center justify-center ${c}">${inner}</span>`;
  return `<div class="flex h-[34px] items-center border-b-2 border-[#1b1b1b] ${r.sel ? 'bg-[#404040]' : 'bg-[#2b2b2b]'}">
    <div class="ml-0.5 flex w-[116px] gap-1">${box(cell, r.sel ? svg('eye', 'h-4 w-[22px]') : '')}${box('')}${box(r.sel ? cell : '')}${box(cell)}</div>
    <span class="ml-6 flex w-[22px] items-center">${svg('down', 'h-2.5 w-3.5 text-[#a8a8a8]')}</span>
    <i class="h-6 w-6 ${r.sel ? 'bg-[#6075d8]' : 'bg-[#a09fc3]'}"></i>
    <b class="w-[76px] pl-[18px] text-[#a8a8a8]">${r.layer}</b>
    <span class="flex w-8 pl-px">${r.sel ? svg('star', 'h-[22px] w-6') : svg('ai', 'h-[26px] w-6')}</span>
    <span class="flex h-8 w-[222px] items-center pl-1.5 font-bold whitespace-nowrap ${r.sel ? 'bg-[#939393] text-[#1e1e1e]' : 'text-[#a0a0a0]'}">${r.name}</span>
    <div class="flex w-[270px] gap-1 pl-2.5">
      ${box(cell, svg('shy', 'h-5 w-6'))}${box(cell, r.sel ? svg('sun', 'h-5 w-5 text-[#808080]') : '')}${box(cell, svg('slash', 'h-[22px] w-[22px]'))}
      ${box('')}${box('')}${box(cell)}${box(cell)}${box(r.sel ? 'border-2 border-b-0 border-[#a8a8a8] bg-[#2c2c2c]' : 'border-2 border-t-0 border-dotted border-[#a8a8a8] bg-[#1c1c1c]', r.sel ? svg('cube', 'h-[22px] w-5 shrink-0') : '')}
    </div>
    <span class="w-[50px] pl-[15px]">${svg('whip', 'h-[22px] w-6')}</span>
    ${pick('Parent', 'h-[30px] w-[182px]')}
  </div>`;
}
function row(r) {
  if (r.layer) return layerRow(r);
  let left = '', mid = '';
  if (r.head) {
    left = `<span class="ml-[176px] w-[30px]">${r.closed ? svg('right', 'h-4 w-2') : svg('down', 'h-2.5 w-3.5')}</span><span class="pt-1">${r.head}</span>`;
    if (r.reset) mid = '<button class="text-[#4596ec]">Reset</button>';
    if (r.add) mid = `<span class="ml-[180px] w-[52px] pt-1">Add:</span>${svg('play', 'h-[22px] w-[22px]')}`;
  } else if (r.group) {
    left = `<span class="ml-0.5 flex h-7 w-7 items-center justify-center bg-[#161616]">${svg('eye', 'h-4 w-[22px]')}</span><span class="ml-[179px] w-[31px]">${svg('right', 'h-4 w-2')}</span><span class="pt-1">${r.group}</span>`;
  } else if (r.bevel) {
    left = `<span class="pt-1 pl-[240px]">${r.bevel}</span>`;
    mid = pick(r.bevel, 'h-[30px] w-[256px]');
  } else {
    left = `<span class="ml-[236px] w-9">${svg('watch', 'h-[27px] w-[22px]')}</span><span class="pt-1">${r.prop}</span>`;
    mid = (r.link ? `<span class="-ml-0.5 mr-2 flex h-7 w-7 items-center justify-center bg-[#161616]">${svg('link', 'h-3.5 w-6')}</span>` : '') + `<span class="flex gap-px pl-0.5">${value(r.v)}</span>`;
  }
  const whip = r.prop || r.bevel ? svg('whip', 'h-[22px] w-6') : '';
  return `<div class="flex h-[34px] items-center border-b-2 border-[#1b1b1b]">
    <div class="flex w-[528px] items-center whitespace-nowrap">${left}</div>
    <div class="flex w-[301px] items-center whitespace-nowrap">${mid}</div>${whip}</div>`;
}
document.getElementById('layers').innerHTML = rows.map(row).join('');
document.getElementById('tracks').innerHTML = rows.map(r => r.layer
  ? `<div class="h-[34px] border-b-2 border-[#1b1b1b] pl-[15px] ${r.sel ? 'bg-[#404040]' : 'bg-[#2b2b2b]'}"><div class="h-8 ${r.sel ? 'border-t-2 border-[#9ba6dc] bg-linear-to-b from-[#6a7acc] to-[#3f58bc]' : 'border-b-2 border-[#555463] bg-[#6b6a79]'}"></div></div>`
  : `<div class="flex h-[34px] items-center border-b-2 border-[#1b1b1b] bg-[#2d2d2d] pl-2">${r.bevel ? '' : svg('ibeam', 'h-[22px] w-3.5')}</div>`).join('');
document.getElementById('ruler').innerHTML = ['0:00s', '02s', '04s', '06s', '08s', '10s', '12s', '14s', '16s'].map(t =>
  `<div class="flex w-[180px] shrink-0 flex-col items-center"><span>${t}</span><i class="h-2.5 w-0.5 bg-[#777777]"></i></div>`).join('');
</script>
</body>
</html>
